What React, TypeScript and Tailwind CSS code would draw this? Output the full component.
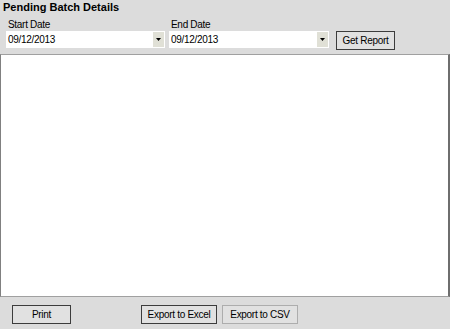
import React from 'react';

const DateBox = ({ label, value, width }: { label: string; value: string; width: string }) => (
  <div className={`flex flex-col ${width}`}>
    <div className="h-[15px] pl-[2px] pt-[3px] text-[10px] leading-[12px] tracking-[-0.3px] text-black">{label}</div>
    <div className="h-[17px] bg-white flex items-center justify-between pl-[2px] pr-[1px]">
      <span className="text-[10px] leading-[12px] tracking-[-0.3px] text-black">{value}</span>
      <div className="w-[11px] h-[15px] bg-[#e0e0d6] flex items-center justify-center">
        <svg width="5" height="3" viewBox="0 0 5 3">
          <path d="M0 0 H5 L2.5 3 Z" fill="#000" />
        </svg>
      </div>
    </div>
  </div>
);

const WinButton = ({ label, width, light }: { label: string; width: string; light?: boolean }) => (
  <button
    className={`h-[19px] ${width} bg-[#e1e1e1] border ${
      light ? 'border-[#adadad]' : 'border-[#3c3c3c]'
    } text-[10px] leading-[12px] tracking-[-0.3px] text-black flex items-center justify-center`}
  >
    {label}
  </button>
);

export default function App() {
  return (
    <div
      className="w-[450px] h-[329px] bg-[#dcdcdc] flex flex-col"
      style={{ fontFamily: '"Liberation Sans", Arial, sans-serif' }}
    >
      <div className="h-[16px] pl-[3px] pt-[1px] text-[11px] font-bold leading-[13px] text-black">
        Pending Batch Details
      </div>

      <div className="flex items-end pl-[6px]">
        <DateBox label="Start Date" value="09/12/2013" width="w-[159px]" />
        <div className="w-[4px]" />
        <DateBox label="End Date" value="09/12/2013" width="w-[160px]" />
        <div className="ml-[7px] -mb-[2px]">
          <WinButton label="Get Report" width="w-[59px]" />
        </div>
      </div>

      <div className="mt-[6px] h-[243px] bg-white border-t border-l border-t-[#a0a0a0] border-l-[#808080] border-r-2 border-r-[#6e6e6e] border-b border-b-[#a0a0a0]" />

      <div className="flex pt-[8px] pl-[12px]">
        <WinButton label="Print" width="w-[59px]" />
        <div className="ml-[70px] flex gap-[5px]">
          <WinButton label="Export to Excel" width="w-[76px]" />
          <WinButton label="Export to CSV" width="w-[76px]" light />
        </div>
      </div>
    </div>
  );
}
